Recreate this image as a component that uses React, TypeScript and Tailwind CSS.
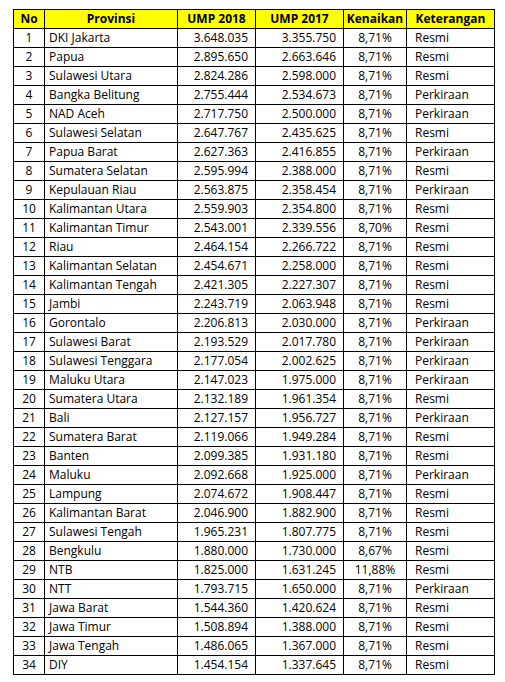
// UMP 2018 per provinsi — tabel rekap
const ROWS: [string, string, string, string, string][] = [
  ['DKI Jakarta', '3.648.035', '3.355.750', '8,71%', 'Resmi'],
  ['Papua', '2.895.650', '2.663.646', '8,71%', 'Resmi'],
  ['Sulawesi Utara', '2.824.286', '2.598.000', '8,71%', 'Resmi'],
  ['Bangka Belitung', '2.755.444', '2.534.673', '8,71%', 'Perkiraan'],
  ['NAD Aceh', '2.717.750', '2.500.000', '8,71%', 'Perkiraan'],
  ['Sulawesi Selatan', '2.647.767', '2.435.625', '8,71%', 'Resmi'],
  ['Papua Barat', '2.627.363', '2.416.855', '8,71%', 'Perkiraan'],
  ['Sumatera Selatan', '2.595.994', '2.388.000', '8,71%', 'Resmi'],
  ['Kepulauan Riau', '2.563.875', '2.358.454', '8,71%', 'Perkiraan'],
  ['Kalimantan Utara', '2.559.903', '2.354.800', '8,71%', 'Resmi'],
  ['Kalimantan Timur', '2.543.001', '2.339.556', '8,70%', 'Resmi'],
  ['Riau', '2.464.154', '2.266.722', '8,71%', 'Resmi'],
  ['Kalimantan Selatan', '2.454.671', '2.258.000', '8,71%', 'Resmi'],
  ['Kalimantan Tengah', '2.421.305', '2.227.307', '8,71%', 'Resmi'],
  ['Jambi', '2.243.719', '2.063.948', '8,71%', 'Resmi'],
  ['Gorontalo', '2.206.813', '2.030.000', '8,71%', 'Perkiraan'],
  ['Sulawesi Barat', '2.193.529', '2.017.780', '8,71%', 'Perkiraan'],
  ['Sulawesi Tenggara', '2.177.054', '2.002.625', '8,71%', 'Perkiraan'],
  ['Maluku Utara', '2.147.023', '1.975.000', '8,71%', 'Perkiraan'],
  ['Sumatera Utara', '2.132.189', '1.961.354', '8,71%', 'Resmi'],
  ['Bali', '2.127.157', '1.956.727', '8,71%', 'Perkiraan'],
  ['Sumatera Barat', '2.119.066', '1.949.284', '8,71%', 'Resmi'],
  ['Banten', '2.099.385', '1.931.180', '8,71%', 'Resmi'],
  ['Maluku', '2.092.668', '1.925.000', '8,71%', 'Perkiraan'],
  ['Lampung', '2.074.672', '1.908.447', '8,71%', 'Resmi'],
  ['Kalimantan Barat', '2.046.900', '1.882.900', '8,71%', 'Resmi'],
  ['Sulawesi Tengah', '1.965.231', '1.807.775', '8,71%', 'Resmi'],
  ['Bengkulu', '1.880.000', '1.730.000', '8,67%', 'Resmi'],
  ['NTB', '1.825.000', '1.631.245', '11,88%', 'Resmi'],
  ['NTT', '1.793.715', '1.650.000', '8,71%', 'Perkiraan'],
  ['Jawa Barat', '1.544.360', '1.420.624', '8,71%', 'Resmi'],
  ['Jawa Timur', '1.508.894', '1.388.000', '8,71%', 'Resmi'],
  ['Jawa Tengah', '1.486.065', '1.367.000', '8,71%', 'Resmi'],
  ['DIY', '1.454.154', '1.337.645', '8,71%', 'Resmi'],
];

const HEADERS = ['No', 'Provinsi', 'UMP 2018', 'UMP 2017', 'Kenaikan', 'Keterangan'];

const cell = 'border border-black p-0 leading-none';

export default function App() {
  return (
    <div className="min-h-screen bg-white pt-[9px] pl-[13px] text-black font-['Open_Sans',sans-serif] text-[12px]">
      <table className="table-fixed border-collapse w-[481px]">
        <colgroup>
          <col className="w-[31px]" />
          <col className="w-[133px]" />
          <col className="w-[78px]" />
          <col className="w-[88px]" />
          <col className="w-[63px]" />
          <col className="w-[88px]" />
        </colgroup>
        <thead>
          <tr className="h-[19px] bg-[#ffff00]">
            {HEADERS.map((h) => (
              <th key={h} className={`${cell} font-bold text-center`}>
                {h}
              </th>
            ))}
          </tr>
        </thead>
        <tbody>
          {ROWS.map(([prov, ump18, ump17, naik, ket], i) => (
            <tr key={prov} className="h-[19px]">
              <td className={`${cell} text-center`}>{i + 1}</td>
              <td className={`${cell} pl-[4px] whitespace-nowrap`}>{prov}</td>
              <td className={`${cell} text-right pr-[7px]`}>{ump18}</td>
              <td className={`${cell} text-right pr-[7px]`}>{ump17}</td>
              <td className={`${cell} text-center`}>{naik}</td>
              <td className={`${cell} pl-[8px]`}>{ket}</td>
            </tr>
          ))}
        </tbody>
      </table>
    </div>
  );
}
